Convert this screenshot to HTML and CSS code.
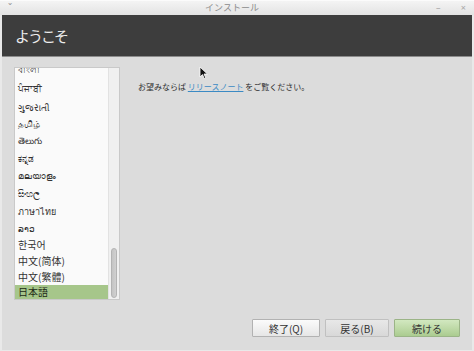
FILE: index.html
```html
<!DOCTYPE html>
<html lang="ja">
<head>
<meta charset="utf-8">
<title>インストール</title>
<link rel="stylesheet" href="styles.css">
</head>
<body>
<div class="window">
  <div class="titlebar">
    <span class="tb-menu">&#711;</span>
    <span class="tb-title">インストール</span>
    <span class="tb-controls"><span>–</span><span>×</span></span>
  </div>
  <div class="frame">
    <div class="header">ようこそ</div>
    <div class="content">
      <div class="listbox">
        <ul class="list">
          <li class="row cut">বাংলা</li>
          <li class="row tall">ਪੰਜਾਬੀ</li>
          <li class="row mid">ગુજરાતી</li>
          <li class="row short">தமிழ்</li>
          <li class="row tall">తెలుగు</li>
          <li class="row">ಕನ್ನಡ</li>
          <li class="row mid">മലയാളം</li>
          <li class="row mid">සිංහල</li>
          <li class="row mid">ภาษาไทย</li>
          <li class="row">ລາວ</li>
          <li class="row cjk">한국어</li>
          <li class="row cjk">中文(简体)</li>
          <li class="row cjk">中文(繁體)</li>
          <li class="row cjk selected">日本語</li>
        </ul>
        <div class="scrollbar"><div class="thumb"></div></div>
      </div>
      <p class="message">お望みならば <a href="#" class="link">リリースノート</a> をご覧ください。</p>
    </div>
    <div class="footer">
      <button class="btn">終了(Q)</button>
      <button class="btn flat">戻る(B)</button>
      <button class="btn primary">続ける</button>
    </div>
  </div>
  <svg class="cursor" width="10" height="14" viewBox="0 0 10 14"><path d="M1 1 L1 11 L3.5 8.6 L5.3 12.6 L6.8 12 L5 8 L8.4 8 Z" fill="#111" stroke="#fff" stroke-width="0.8"/></svg>
</div>
</body>
</html>
```
FILE: styles.css
```css
* { box-sizing: border-box; }
html, body { margin: 0; padding: 0; }
body {
  width: 474px;
  height: 351px;
  overflow: hidden;
  font-family: "Noto Sans", "Noto Sans CJK JP", sans-serif;
  background: #dadada;
}
.window {
  position: relative;
  width: 474px;
  height: 351px;
  display: flex;
  flex-direction: column;
  background: #e9e9e9;
}
.titlebar {
  height: 15px;
  flex: none;
  display: flex;
  align-items: center;
  justify-content: space-between;
  padding: 0 8px 0 8px;
  background: linear-gradient(#f4f4f4, #e3e3e3);
  border-top: 1px solid #fbfbfb;
  color: #8a8a8a;
  font-size: 9px;
  line-height: 14px;
}
.tb-menu { width: 20px; color: #9a9a9a; font-size: 10px; }
.tb-title { font-family: "Noto Sans CJK JP", sans-serif; color: #8b8b8b; }
.tb-controls { width: 30px; display: flex; justify-content: space-between; color: #a8a8a8; font-size: 9px; }
.frame {
  flex: 1;
  display: flex;
  flex-direction: column;
  margin: 0 2px 1px 2px;
  background: #dcdcdc;
}
.header {
  height: 42px;
  flex: none;
  display: flex;
  align-items: center;
  padding-left: 13px;
  background: #3d3d3d;
  border-bottom: 1px solid #8c8c8c;
  color: #ebebeb;
  font-family: "Noto Sans CJK JP", sans-serif;
  font-size: 15px;
  letter-spacing: -2px;
}
.content {
  flex: 1;
  display: flex;
  align-items: flex-start;
  padding: 10px 0 0 12px;
}
.listbox {
  position: relative;
  width: 106px;
  height: 233px;
  flex: none;
  background: #fafafa;
  border: 1px solid #c9c9c9;
  display: flex;
  overflow: hidden;
}
.list {
  list-style: none;
  margin: -5px 0 0 0;
  padding: 0;
  flex: 1;
  display: flex;
  flex-direction: column;
  justify-content: flex-end;
}
.row {
  height: 16px;
  line-height: 16px;
  padding-left: 3px;
  font-size: 9px;
  color: #333;
  white-space: nowrap;
  font-family: "Noto Sans", "Noto Sans CJK JP", sans-serif;
}
.row.cjk { font-family: "Noto Sans CJK JP", sans-serif; font-size: 10px; }
.row.tall { height: 20px; line-height: 20px; }
.row.mid { height: 18px; line-height: 18px; }
.row.short { height: 14px; line-height: 14px; }
.row.cut { height: 19px; line-height: 19px; }
.row.selected {
  height: 14px;
  line-height: 14px;
  background: #a6c68a;
  color: #1e2a16;
}
.scrollbar {
  width: 11px;
  flex: none;
  background: #f0f0f0;
  border-left: 1px solid #e2e2e2;
  display: flex;
  flex-direction: column;
  justify-content: flex-end;
  padding: 0 2px 1px 2px;
}
.thumb {
  height: 50px;
  border-radius: 3px;
  background: linear-gradient(90deg, #c4c4c4, #d0d0d0);
  border: 1px solid #b3b3b3;
}
.message {
  margin: 14px 0 0 18px;
  font-family: "Noto Sans CJK JP", sans-serif;
  font-size: 8px;
  color: #2e2e2e;
}
.link { color: #3b8ac4; text-decoration: underline; }
.footer {
  flex: none;
  display: flex;
  justify-content: flex-end;
  gap: 5px;
  padding: 0 12px 13px 0;
}
.btn {
  width: 66px;
  height: 18px;
  padding: 0;
  font-family: "Noto Sans CJK JP", sans-serif;
  font-size: 10px;
  color: #333;
  background: linear-gradient(#fbfbfb, #e6e6e6);
  border: 1px solid #b2b2b2;
  border-radius: 1px;
}
.btn:first-child { width: 68px; }
.btn.flat { width: 64px; background: linear-gradient(#e8e8e8, #d8d8d8); border-color: #c0c0c0; }
.btn.primary { background: linear-gradient(#d2e8c0, #abcc90); border-color: #9bb487; }
.cursor { position: absolute; left: 199px; top: 66px; }
```
